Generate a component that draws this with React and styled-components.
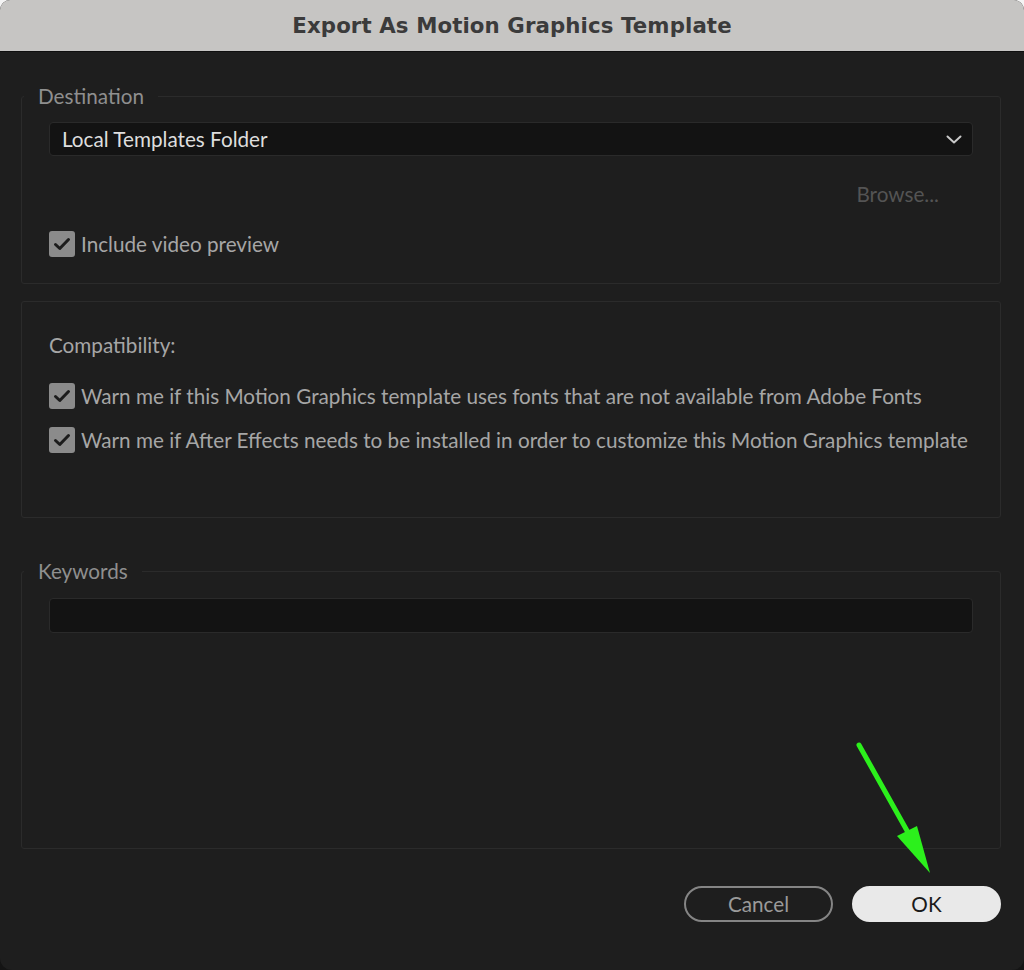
import React from "react";
import styled, { createGlobalStyle } from "styled-components";

const GlobalStyle = createGlobalStyle`
  html, body {
    margin: 0;
    padding: 0;
    background: linear-gradient(#f4f4f4 50%, #141414 50%);
  }
  body {
    font-family: Lato, "Noto Sans", sans-serif;
  }
`;

const Window = styled.div`
  width: 1024px;
  height: 970px;
  box-sizing: border-box;
  display: flex;
  flex-direction: column;
  background: #1e1e1e;
  border-radius: 10px 10px 12px 12px;
  overflow: hidden;
  position: relative;
`;

const TitleBar = styled.div`
  height: 51px;
  flex: none;
  display: flex;
  align-items: center;
  justify-content: center;
  background: #c6c5c3;
  border-bottom: 1px solid #0f0f0f;
  color: #3b3b3b;
  font-family: "DejaVu Sans", Inter, sans-serif;
  font-weight: 700;
  font-size: 21.3px;
  letter-spacing: 0.1px;
`;

const Body = styled.div`
  flex: 1;
  display: flex;
  flex-direction: column;
  padding: 32px 23px 0 21px;
`;

const Group = styled.fieldset`
  margin: ${(p) => p.$top || 0}px 0 0;
  padding: ${(p) => p.$pad || "0 27px 26px 27px"};
  border: 1px solid #2b2b2b;
  border-radius: 3px;
  min-width: 0;
  display: flex;
  flex-direction: column;
  height: ${(p) => (p.$height ? `${p.$height}px` : "auto")};
  box-sizing: border-box;
`;

const Legend = styled.legend`
  margin-left: -25px;
  padding: 0 14px;
  font-size: 20.7px;
  line-height: 24px;
  color: #8f8f8f;
`;

const Select = styled.div`
  height: 34px;
  margin-top: ${(p) => p.$top || 0}px;
  display: flex;
  align-items: center;
  justify-content: space-between;
  padding: 0 10px 0 12px;
  background: #131313;
  border: 1px solid #2a2a2a;
  border-radius: 4px;
  color: #dedede;
  font-size: 20.7px;
  box-sizing: border-box;
`;

const Input = styled.div`
  height: 35px;
  margin-top: ${(p) => p.$top || 0}px;
  background: #131313;
  border: 1px solid #2a2a2a;
  border-radius: 4px;
  box-sizing: border-box;
`;

const BrowseRow = styled.div`
  margin-top: 26px;
  display: flex;
  justify-content: flex-end;
  padding-right: 34px;
  font-size: 20.7px;
  line-height: 24px;
  color: #545454;
`;

const Label = styled.div`
  font-size: 20.7px;
  line-height: 24px;
  color: #a6a6a6;
  margin-top: ${(p) => p.$top || 0}px;
`;

const CheckRow = styled.label`
  display: flex;
  align-items: center;
  gap: 6px;
  height: 26px;
  margin-top: ${(p) => p.$top || 0}px;
  font-size: 20.7px;
  color: #a6a6a6;
  white-space: nowrap;
`;

const Box = styled.span`
  width: 26px;
  height: 26px;
  flex: none;
  display: flex;
  align-items: center;
  justify-content: center;
  background: #8b8b8b;
  border-radius: 3px;
`;

const Footer = styled.div`
  display: flex;
  justify-content: flex-end;
  gap: 19px;
  margin-top: 37px;
`;

const Button = styled.button`
  width: 149px;
  height: 36px;
  border-radius: 18px;
  font-family: Lato, "Noto Sans", sans-serif;
  font-size: 20.7px;
  box-sizing: border-box;
  cursor: pointer;
  border: 2px solid ${(p) => (p.$primary ? "#e9e9e9" : "#858585")};
  background: ${(p) => (p.$primary ? "#e9e9e9" : "transparent")};
  color: ${(p) => (p.$primary ? "#1a1a1a" : "#9a9a9a")};
`;

const Arrow = styled.svg`
  position: absolute;
  left: 0;
  top: 0;
  pointer-events: none;
`;

function Check() {
  return (
    <Box>
      <svg width="18" height="14" viewBox="0 0 18 14">
        <path d="M2.5 7.5 L6.8 11.5 L15.5 2.5" fill="none" stroke="#1c1c1c" strokeWidth="3" strokeLinecap="round" strokeLinejoin="round" />
      </svg>
    </Box>
  );
}

function Chevron() {
  return (
    <svg width="16" height="9" viewBox="0 0 16 9">
      <path d="M1.5 1.5 L8 7.5 L14.5 1.5" fill="none" stroke="#c9c9c9" strokeWidth="2" strokeLinecap="round" strokeLinejoin="round" />
    </svg>
  );
}

export default function App() {
  return (
    <>
      <GlobalStyle />
      <Window>
        <TitleBar>Export As Motion Graphics Template</TitleBar>
        <Body>
          <Group>
            <Legend>Destination</Legend>
            <Select $top={14}>
              <span>Local Templates Folder</span>
              <Chevron />
            </Select>
            <BrowseRow>Browse...</BrowseRow>
            <CheckRow $top={25}>
              <Check />
              Include video preview
            </CheckRow>
          </Group>

          <Group $top={17} $pad="31px 27px 64px 27px">
            <Label>Compatibility:</Label>
            <CheckRow $top={26}>
              <Check />
              Warn me if this Motion Graphics template uses fonts that are not available from Adobe Fonts
            </CheckRow>
            <CheckRow $top={18}>
              <Check />
              Warn me if After Effects needs to be installed in order to customize this Motion Graphics template
            </CheckRow>
          </Group>

          <Group $top={41} $height={290} $pad="0 27px 0 27px">
            <Legend>Keywords</Legend>
            <Input $top={15} />
          </Group>

          <Footer>
            <Button>Cancel</Button>
            <Button $primary>OK</Button>
          </Footer>
        </Body>

        <Arrow width="1024" height="970">
          <line x1="859" y1="745" x2="910" y2="836" stroke="#2cf01c" strokeWidth="5" strokeLinecap="round" />
          <polygon points="897,836 917,826 930,873" fill="#2cf01c" />
        </Arrow>
      </Window>
    </>
  );
}
